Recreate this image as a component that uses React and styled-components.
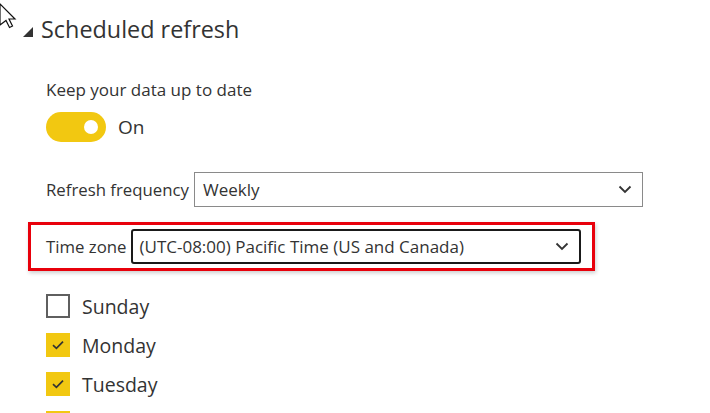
import React, { useState } from 'react';
import styled, { createGlobalStyle } from 'styled-components';

const GlobalStyle = createGlobalStyle`
  body {
    margin: 0;
    background: #fff;
    font-family: "Segoe UI", "Open Sans", "Noto Sans", sans-serif;
    color: #333;
  }
`;

const Page = styled.div`
  position: relative;
  width: 710px;
  height: 413px;
  overflow: hidden;
  padding: 13px 0 0 23px;
  box-sizing: border-box;
`;

const Cursor = styled.svg`
  position: absolute;
  left: 0;
  top: 0;
`;

const Header = styled.div`
  display: flex;
  align-items: center;
  gap: 8px;
`;

const Caret = styled.svg`
  margin-top: 6px;
`;

const Title = styled.h2`
  margin: 0;
  font-size: 23.4px;
  font-weight: 400;
  color: #333;
`;

const Content = styled.div`
  padding: 0 0 0 23px;
  margin-top: 33px;
`;

const Caption = styled.div`
  font-size: 17px;
  color: #333;
`;

const ToggleRow = styled.div`
  display: flex;
  align-items: center;
  gap: 12px;
  margin-top: 11px;
`;

const Track = styled.button`
  position: relative;
  width: 60px;
  height: 30px;
  border: none;
  border-radius: 15px;
  background: ${p => (p.on ? '#f2c811' : '#c8c8c8')};
  padding: 0;
  cursor: pointer;
`;

const Knob = styled.span`
  position: absolute;
  top: 8px;
  left: ${p => (p.on ? '38px' : '8px')};
  width: 14px;
  height: 14px;
  border-radius: 50%;
  background: #fff;
`;

const ToggleText = styled.span`
  font-size: 19px;
  color: #333;
`;

const FieldRow = styled.div`
  display: flex;
  align-items: center;
  gap: 5px;
  margin-top: ${p => p.top || 0}px;
`;

const Highlight = styled.div`
  display: flex;
  align-items: center;
  gap: 5px;
  width: 567px;
  height: 49px;
  box-sizing: border-box;
  margin: 15px 0 0 -18px;
  padding: 0 0 0 15px;
  border: 3px solid #e8000b;
  box-shadow: 1px 2px 4px rgba(0, 0, 0, 0.2);
`;

const Label = styled.span`
  font-size: 16.8px;
  color: #333;
  white-space: nowrap;
`;

const Select = styled.div`
  display: flex;
  align-items: center;
  justify-content: space-between;
  box-sizing: border-box;
  width: ${p => p.width}px;
  height: ${p => p.height}px;
  padding: 0 10px 0 ${p => (p.strong ? 6 : 8)}px;
  font-size: 17px;
  color: #333;
  background: #fff;
  border: ${p => (p.strong ? '2px solid #1a1a1a' : '1px solid #8a8a8a')};
  border-radius: ${p => (p.strong ? '3px' : '0')};
`;

const Days = styled.div`
  display: flex;
  flex-direction: column;
  gap: 15px;
  margin-top: 23px;
`;

const Day = styled.label`
  display: flex;
  align-items: center;
  gap: 12px;
  height: 24px;
  font-size: 19.5px;
  color: #333;
  cursor: pointer;
`;

const Box = styled.span`
  display: flex;
  align-items: center;
  justify-content: center;
  width: 24px;
  height: 24px;
  box-sizing: border-box;
  background: ${p => (p.checked ? '#f2c811' : '#fff')};
  border: ${p => (p.checked ? 'none' : '2px solid #5f5f5f')};
`;

const Chevron = () => (
  <svg width="14" height="9" viewBox="0 0 14 9">
    <path d="M1.5 1.5 L7 7 L12.5 1.5" fill="none" stroke="#333" strokeWidth="1.8" />
  </svg>
);

const Check = () => (
  <svg width="14" height="12" viewBox="0 0 14 12">
    <path d="M2 6.2 L5.4 9.4 L12 2.6" fill="none" stroke="#333" strokeWidth="1.7" />
  </svg>
);

const days = [
  { name: 'Sunday', checked: false },
  { name: 'Monday', checked: true },
  { name: 'Tuesday', checked: true },
  { name: 'Wednesday', checked: true },
];

const App = () => {
  const [on, setOn] = useState(true);

  return (
    <>
      <GlobalStyle />
      <Page>
        <Cursor width="20" height="30" viewBox="0 0 20 30">
          <path d="M0 4 L15 19 L9 19 L12.5 26 L9.5 27.5 L6 20.5 L0 25 Z" fill="#fff" stroke="#111" strokeWidth="1.2" />
        </Cursor>
        <Header>
          <Caret width="10" height="10" viewBox="0 0 10 10">
            <path d="M10 0 L10 10 L0 10 Z" fill="#333" />
          </Caret>
          <Title>Scheduled refresh</Title>
        </Header>
        <Content>
          <Caption>Keep your data up to date</Caption>
          <ToggleRow>
            <Track on={on ? 1 : 0} onClick={() => setOn(!on)}>
              <Knob on={on ? 1 : 0} />
            </Track>
            <ToggleText>{on ? 'On' : 'Off'}</ToggleText>
          </ToggleRow>
          <FieldRow top={30}>
            <Label>Refresh frequency</Label>
            <Select width={449} height={35}>
              <span>Weekly</span>
              <Chevron />
            </Select>
          </FieldRow>
          <Highlight>
            <Label>Time zone</Label>
            <Select strong width={450} height={35}>
              <span>(UTC-08:00) Pacific Time (US and Canada)</span>
              <Chevron />
            </Select>
          </Highlight>
          <Days>
            {days.map(d => (
              <Day key={d.name}>
                <Box checked={d.checked}>{d.checked && <Check />}</Box>
                {d.name}
              </Day>
            ))}
          </Days>
        </Content>
      </Page>
    </>
  );
};

export default App;
